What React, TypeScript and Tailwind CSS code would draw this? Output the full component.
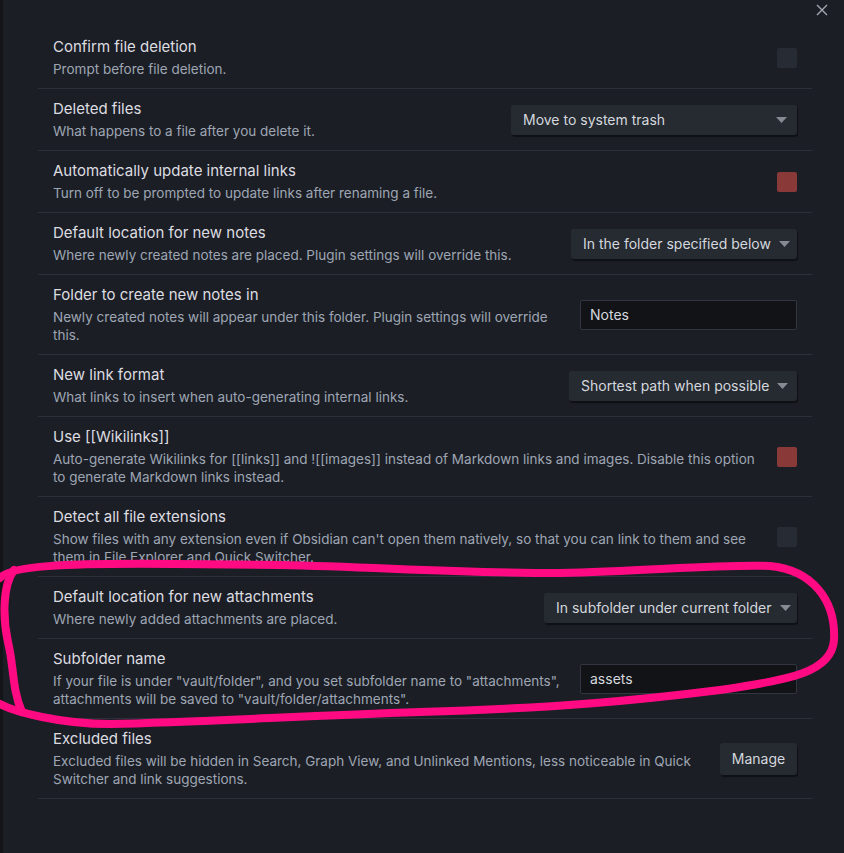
import type { ReactNode } from 'react'

type Control =
  | { kind: 'toggle'; on: boolean }
  | { kind: 'dropdown'; value: string; width: string }
  | { kind: 'input'; value: string }
  | { kind: 'button'; label: string }

interface SettingRow {
  name: string
  desc: string[]
  control: Control
}

const rows: SettingRow[] = [
  { name: 'Confirm file deletion', desc: ['Prompt before file deletion.'], control: { kind: 'toggle', on: false } },
  {
    name: 'Deleted files',
    desc: ['What happens to a file after you delete it.'],
    control: { kind: 'dropdown', value: 'Move to system trash', width: 'w-[286px]' },
  },
  {
    name: 'Automatically update internal links',
    desc: ['Turn off to be prompted to update links after renaming a file.'],
    control: { kind: 'toggle', on: true },
  },
  {
    name: 'Default location for new notes',
    desc: ['Where newly created notes are placed. Plugin settings will override this.'],
    control: { kind: 'dropdown', value: 'In the folder specified below', width: 'w-[226px]' },
  },
  {
    name: 'Folder to create new notes in',
    desc: ['Newly created notes will appear under this folder. Plugin settings will override', 'this.'],
    control: { kind: 'input', value: 'Notes' },
  },
  {
    name: 'New link format',
    desc: ['What links to insert when auto-generating internal links.'],
    control: { kind: 'dropdown', value: 'Shortest path when possible', width: 'w-[228px]' },
  },
  {
    name: 'Use [[Wikilinks]]',
    desc: [
      'Auto-generate Wikilinks for [[links]] and ![[images]] instead of Markdown links and images. Disable this option',
      'to generate Markdown links instead.',
    ],
    control: { kind: 'toggle', on: true },
  },
  {
    name: 'Detect all file extensions',
    desc: [
      "Show files with any extension even if Obsidian can't open them natively, so that you can link to them and see",
      'them in File Explorer and Quick Switcher.',
    ],
    control: { kind: 'toggle', on: false },
  },
  {
    name: 'Default location for new attachments',
    desc: ['Where newly added attachments are placed.'],
    control: { kind: 'dropdown', value: 'In subfolder under current folder', width: 'w-[253px]' },
  },
  {
    name: 'Subfolder name',
    desc: [
      'If your file is under "vault/folder", and you set subfolder name to "attachments",',
      'attachments will be saved to "vault/folder/attachments".',
    ],
    control: { kind: 'input', value: 'assets' },
  },
  {
    name: 'Excluded files',
    desc: [
      'Excluded files will be hidden in Search, Graph View, and Unlinked Mentions, less noticeable in Quick',
      'Switcher and link suggestions.',
    ],
    control: { kind: 'button', label: 'Manage' },
  },
]

function renderControl(c: Control): ReactNode {
  if (c.kind === 'toggle') {
    return <div className={`w-5 h-5 rounded-[2px] ${c.on ? 'bg-[#8a3939]' : 'bg-[#272b33]'}`} />
  }
  if (c.kind === 'dropdown') {
    return (
      <div
        className={`${c.width} h-[30px] flex items-center justify-between pl-3 pr-[10px] bg-[#262a31] rounded-[3px] shadow-[1px_2px_1px_rgba(0,0,0,0.45)] text-[14px] text-[#d4d8de]`}
      >
        <span className="whitespace-nowrap">{c.value}</span>
        <svg width="11" height="6" viewBox="0 0 11 6" className="ml-2 shrink-0">
          <path d="M0 0 L11 0 L5.5 6 Z" fill="#858a93" />
        </svg>
      </div>
    )
  }
  if (c.kind === 'input') {
    return (
      <div className="w-[217px] h-[30px] flex items-center px-[9px] bg-[#121317] border border-[#30353f] rounded-[2px] text-[14px] text-[#d4d8de]">
        {c.value}
      </div>
    )
  }
  return (
    <div className="w-[77px] h-[32px] flex items-center justify-center bg-[#262a31] rounded-[3px] shadow-[1px_2px_1px_rgba(0,0,0,0.45)] text-[14px] text-[#d4d8de]">
      {c.label}
    </div>
  )
}

export default function App() {
  return (
    <div
      className="relative w-[844px] h-[853px] overflow-hidden bg-[#1c1e25] flex"
      style={{ fontFamily: 'Inter, "Noto Sans", sans-serif' }}
    >
      {/* 左端の暗いストリップ */}
      <div className="w-[3px] h-full bg-[#141519]" />

      <div className="ml-[35px] w-[774px] pt-[27px]">
        {rows.map((row) => (
          <div
            key={row.name}
            className="flex items-center justify-between px-[15px] pt-[10px] pb-[10px] border-b border-[#2c303a]"
          >
            <div className="flex flex-col">
              <div className="text-[15px] leading-[20px] text-[#dcdde0] whitespace-nowrap">{row.name}</div>
              <div className="mt-[3px] text-[13.5px] leading-[18px] text-[#9ea6b4]">
                {row.desc.map((line) => (
                  <div key={line} className="whitespace-nowrap">
                    {line}
                  </div>
                ))}
              </div>
            </div>
            <div className="shrink-0">{renderControl(row.control)}</div>
          </div>
        ))}
      </div>

      {/* 閉じるボタン */}
      <svg width="12" height="12" viewBox="0 0 12 12" className="absolute top-[4px] right-[16px]">
        <path d="M1 1 L11 11 M11 1 L1 11" stroke="#a4a8b0" strokeWidth="1.4" />
      </svg>

      {/* 手書きの注釈 */}
      <svg width="844" height="853" viewBox="0 0 844 853" className="absolute inset-0 pointer-events-none">
        <path
          d="M0 578 C 10 566, 60 563, 175 564 L 280 565 C 380 567, 450 573, 560 573 C 650 571, 720 564, 770 566 C 812 570, 836 600, 834 640 C 832 672, 790 680, 720 690 C 640 700, 560 708, 420 712 C 300 716, 200 722, 110 724 C 60 724, 15 712, 0 704"
          fill="none"
          stroke="#ff0a82"
          strokeWidth="8"
          strokeLinecap="round"
        />
        <path
          d="M14 570 C 2 586, 3 620, 8 642 C 14 666, 12 690, 22 712"
          fill="none"
          stroke="#ff0a82"
          strokeWidth="8"
          strokeLinecap="round"
        />
      </svg>
    </div>
  )
}
